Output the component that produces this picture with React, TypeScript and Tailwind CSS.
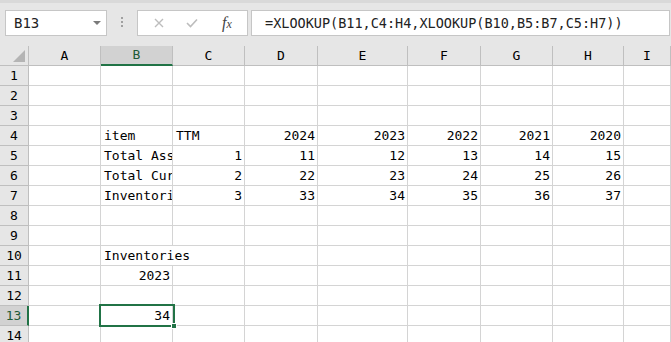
import React from "react";

type Cell = { v: string; right?: boolean; overflow?: boolean };

const cols = ["A", "B", "C", "D", "E", "F", "G", "H", "I"];

// row number -> column letter -> cell
const data: Record<number, Record<string, Cell>> = {
  4: {
    B: { v: "item" },
    C: { v: "TTM" },
    D: { v: "2024", right: true },
    E: { v: "2023", right: true },
    F: { v: "2022", right: true },
    G: { v: "2021", right: true },
    H: { v: "2020", right: true },
  },
  5: {
    B: { v: "Total Assets" },
    C: { v: "1", right: true },
    D: { v: "11", right: true },
    E: { v: "12", right: true },
    F: { v: "13", right: true },
    G: { v: "14", right: true },
    H: { v: "15", right: true },
  },
  6: {
    B: { v: "Total Current Assets" },
    C: { v: "2", right: true },
    D: { v: "22", right: true },
    E: { v: "23", right: true },
    F: { v: "24", right: true },
    G: { v: "25", right: true },
    H: { v: "26", right: true },
  },
  7: {
    B: { v: "Inventories" },
    C: { v: "3", right: true },
    D: { v: "33", right: true },
    E: { v: "34", right: true },
    F: { v: "35", right: true },
    G: { v: "36", right: true },
    H: { v: "37", right: true },
  },
  10: { B: { v: "Inventories", overflow: true } },
  11: { B: { v: "2023", right: true } },
  13: { B: { v: "34", right: true } },
};

const rows = Array.from({ length: 14 }, (_, i) => i + 1);

function FormulaBar() {
  return (
    <div className="flex h-[46px] items-start border-t-[3px] border-[#d9d9d9] bg-[#e6e6e6] pt-[7px]">
      <div className="ml-[5px] flex h-[26px] w-[102px] items-center justify-between border border-[#c6c6c6] bg-white pl-[8px] pr-[5px] text-[14px] text-[#222]">
        <span>B13</span>
        <svg width="8" height="4" viewBox="0 0 8 4">
          <polygon points="0,0 8,0 4,4" fill="#7a7a7a" />
        </svg>
      </div>
      <div className="flex w-[30px] flex-col items-center gap-[2px] pt-[7px]">
        <span className="h-[2px] w-[2px] bg-[#a0a0a0]" />
        <span className="h-[2px] w-[2px] bg-[#a0a0a0]" />
        <span className="h-[2px] w-[2px] bg-[#a0a0a0]" />
      </div>
      <div className="flex h-[26px] w-[111px] items-center border border-[#c6c6c6] bg-white">
        <svg className="ml-[16px]" width="10" height="10" viewBox="0 0 10 10">
          <path d="M1 1 L9 9 M9 1 L1 9" stroke="#bdbdbd" strokeWidth="1.4" />
        </svg>
        <svg className="ml-[22px]" width="12" height="10" viewBox="0 0 12 10">
          <path d="M1 5 L4.5 8.5 L11 1.5" stroke="#bdbdbd" strokeWidth="1.6" fill="none" />
        </svg>
        <span className="ml-[24px] font-['Liberation_Serif',serif] text-[16px] italic text-[#444]">
          f<span className="text-[12px]">x</span>
        </span>
      </div>
      <div className="ml-[3px] flex h-[26px] w-[419px] items-center border border-[#c6c6c6] bg-white pl-[13px] text-[13.5px] text-[#222]">
        =XLOOKUP(B11,C4:H4,XLOOKUP(B10,B5:B7,C5:H7))
      </div>
    </div>
  );
}

export default function App() {
  return (
    <div className="h-[342px] w-[671px] overflow-hidden bg-white font-['DejaVu_Sans_Mono',monospace] text-black">
      <FormulaBar />
      <div className="grid grid-cols-[29px_72px_72px_72px_73px_90px_73px_72px_71px_1fr] auto-rows-[20px]">
        {/* header row */}
        <div className="relative h-[20px] border-r border-b border-[#bfbfbf] bg-[#e6e6e6]">
          <svg className="absolute left-[13px] top-[4px]" width="12" height="12" viewBox="0 0 12 12">
            <polygon points="12,0 12,12 0,12" fill="#b4b4b4" />
          </svg>
        </div>
        {cols.map((c) => (
          <div
            key={c}
            className={
              c === "B"
                ? "flex h-[20px] items-center justify-center border-r border-b-2 border-r-[#bfbfbf] border-b-[#217346] bg-[#d2d2d2] pb-[1px] text-[13px] text-[#1e5a38]"
                : "flex h-[20px] items-center justify-center border-r border-b border-[#bfbfbf] bg-[#e6e6e6] pt-[1px] text-[13px]"
            }
          >
            {c}
          </div>
        ))}

        {rows.map((r) => (
          <React.Fragment key={r}>
            <div
              className={
                r === 13
                  ? "flex h-[20px] items-center justify-center border-r-2 border-b border-r-[#217346] border-b-[#bfbfbf] bg-[#d2d2d2] pt-[1px] text-[13px] text-[#1e5a38]"
                  : "flex h-[20px] items-center justify-center border-r border-b border-[#bfbfbf] bg-[#e6e6e6] pt-[1px] text-[13px]"
              }
            >
              {r}
            </div>
            {cols.map((c) => {
              const cell = data[r]?.[c];
              const selected = r === 13 && c === "B";
              return (
                <div
                  key={c}
                  className={
                    "relative flex h-[20px] items-end whitespace-nowrap border-b border-[#d4d4d4] pb-[1px] text-[13px] leading-[17px] " +
                    (cell?.overflow
                      ? "z-10 overflow-visible "
                      : selected
                        ? "z-10 overflow-visible border-r "
                        : "overflow-hidden border-r ") +
                    (cell?.right ? "justify-end pr-[2px]" : "pl-[3px]")
                  }
                >
                  {cell && <span>{cell.v}</span>}
                  {selected && (
                    <div className="absolute -left-[2px] -top-[2px] h-[23px] w-[76px] border-2 border-[#217346]">
                      <div className="absolute -bottom-[4px] -right-[4px] h-[6px] w-[6px] border border-white bg-[#217346]" />
                    </div>
                  )}
                </div>
              );
            })}
          </React.Fragment>
        ))}
      </div>
    </div>
  );
}
